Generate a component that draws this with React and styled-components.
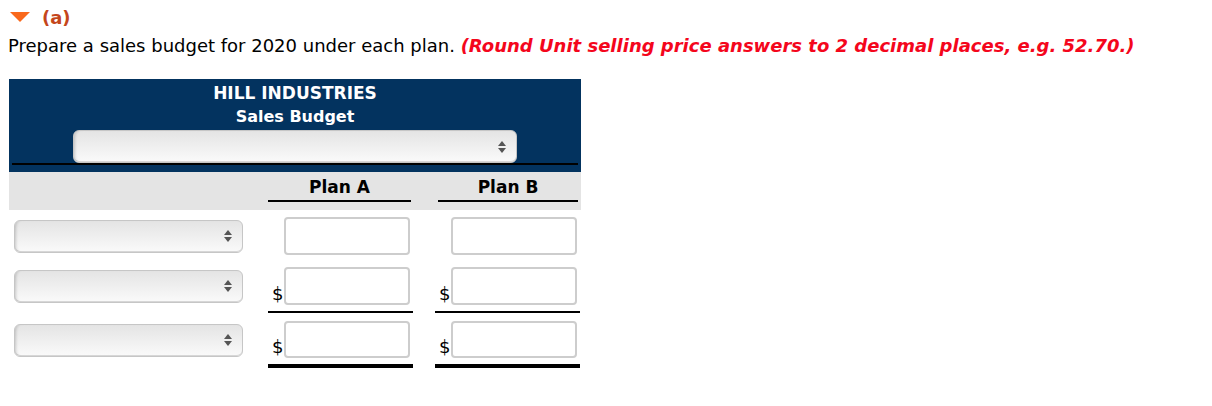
import React from "react";
import styled, { createGlobalStyle } from "styled-components";

const GlobalStyle = createGlobalStyle`
  body {
    margin: 0;
    background: #fff;
    font-family: "DejaVu Sans", Verdana, sans-serif;
    color: #000;
  }
`;

const Page = styled.div`
  padding: 8px 8px 0 8px;
`;

const Heading = styled.div`
  display: flex;
  align-items: center;
  gap: 12px;
  height: 18px;
  padding-left: 2px;
`;

const Toggle = styled.svg`
  width: 20px;
  height: 10px;
`;

const PartLabel = styled.span`
  font-size: 18px;
  font-weight: bold;
  color: #c4461b;
`;

const Instructions = styled.p`
  margin: 10px 0 0 0;
  font-size: 18px;
  line-height: 20px;
`;

const Note = styled.span`
  color: #f4061c;
  font-weight: bold;
  font-style: italic;
`;

const Table = styled.div`
  width: 572px;
  margin: 23px 0 0 1px;
`;

const TitleBlock = styled.div`
  background: #03335f;
  padding: 3px 0 7px 0;
  display: flex;
  flex-direction: column;
  align-items: center;
  color: #fff;
  font-weight: bold;
  font-size: 17px;
  line-height: 23px;
`;

const SubTitle = styled.span`
  font-size: 16px;
`;

const TitleSelectRow = styled.div`
  align-self: stretch;
  margin: 2px 3px 0 3px;
  display: flex;
  justify-content: center;
  border-bottom: 2px solid #000;
`;

const SelectBox = styled.div`
  position: relative;
  flex: none;
  width: ${(p) => p.width}px;
  height: 33px;
  margin-left: ${(p) => p.offset || 0}px;
  box-sizing: border-box;
  border: 1px solid #c6c6c6;
  border-radius: 6px;
  background: linear-gradient(to bottom, #e4e4e4 0%, #efefef 50%, #fafafa 100%);
  box-shadow: inset 3px 0 3px -2px rgba(0, 0, 0, 0.18),
    inset 0 -1px 0 #d8d8d8;
`;

const Arrows = styled.svg`
  position: absolute;
  right: 10px;
  top: 50%;
  transform: translateY(-50%);
  width: 8px;
  height: 12px;
`;

const HeaderRow = styled.div`
  display: flex;
  align-items: flex-start;
  background: #e4e4e4;
  padding: 6px 0 8px 0;
`;

const Row = styled.div`
  display: flex;
  align-items: flex-start;
  padding-top: ${(p) => p.top}px;
`;

const LabelCell = styled.div`
  width: 259px;
  height: 38px;
  display: flex;
  align-items: center;
`;

const Blank = styled.div`
  width: 259px;
`;

const PlanHead = styled.div`
  width: ${(p) => p.w}px;
  margin-left: ${(p) => p.left || 0}px;
  text-align: center;
  font-weight: bold;
  font-size: 17px;
  line-height: 18px;
  padding-bottom: 4px;
  border-bottom: 2px solid #000;
`;

const ValueCell = styled.div`
  width: 145px;
  margin-left: ${(p) => p.left || 0}px;
  padding-bottom: ${(p) => (p.rule ? 6 : 0)}px;
  border-bottom: ${(p) => p.rule || 0}px solid #000;
`;

const ValueLine = styled.div`
  display: flex;
  align-items: flex-end;
  height: ${(p) => p.h}px;
  padding: 0 3px 0 4px;
`;

const Dollar = styled.span`
  font-size: 18px;
  line-height: 20px;
  padding-bottom: 1px;
`;

const Input = styled.input`
  margin-left: auto;
  width: 126px;
  height: 100%;
  box-sizing: border-box;
  border: 2px solid #cdcdcd;
  border-radius: 4px;
  background: #fff;
  outline: none;
`;

const Select = ({ width, offset }) => (
  <SelectBox width={width} offset={offset}>
    <Arrows viewBox="0 0 8 12">
      <path d="M4 0 L8 5 L0 5 Z" fill="#555" />
      <path d="M0 7 L8 7 L4 12 Z" fill="#555" />
    </Arrows>
  </SelectBox>
);

const Amount = ({ dollar, h }) => (
  <ValueLine h={h}>
    {dollar && <Dollar>$</Dollar>}
    <Input type="text" />
  </ValueLine>
);

const rows = [
  { top: 7, h: 38, dollar: false, rule: 0 },
  { top: 12, h: 38, dollar: true, rule: 2 },
  { top: 8, h: 37, dollar: true, rule: 4 },
];

export default function App() {
  return (
    <Page>
      <GlobalStyle />
      <Heading>
        <Toggle viewBox="0 0 20 10">
          <path d="M0 0 L20 0 L10 10 Z" fill="#f9691c" />
        </Toggle>
        <PartLabel>(a)</PartLabel>
      </Heading>
      <Instructions>
        Prepare a sales budget for 2020 under each plan.{" "}
        <Note>
          (Round Unit selling price answers to 2 decimal places, e.g. 52.70.)
        </Note>
      </Instructions>

      <Table>
        <TitleBlock>
          <span>HILL INDUSTRIES</span>
          <SubTitle>Sales Budget</SubTitle>
          <TitleSelectRow>
            <Select width={444} />
          </TitleSelectRow>
        </TitleBlock>

        <HeaderRow>
          <Blank />
          <PlanHead w={143}>Plan A</PlanHead>
          <PlanHead w={140} left={27}>
            Plan B
          </PlanHead>
        </HeaderRow>

        {rows.map((r, i) => (
          <Row key={i} top={r.top}>
            <LabelCell>
              <Select width={229} offset={5} />
            </LabelCell>
            <ValueCell rule={r.rule}>
              <Amount dollar={r.dollar} h={r.h} />
            </ValueCell>
            <ValueCell rule={r.rule} left={22}>
              <Amount dollar={r.dollar} h={r.h} />
            </ValueCell>
          </Row>
        ))}
      </Table>
    </Page>
  );
}
